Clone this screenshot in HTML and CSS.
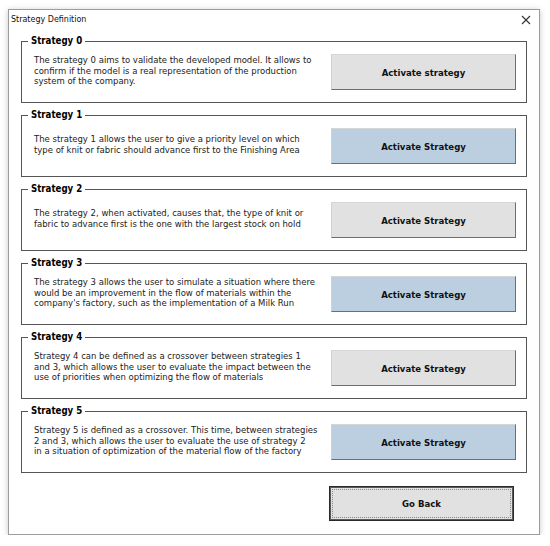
FILE: index.html
```html
<!DOCTYPE html>
<html>
<head>
<meta charset="utf-8">
<link rel="stylesheet" href="styles.css">
</head>
<body>
<div class="window">
  <div class="titlebar">
    <span class="title">Strategy Definition</span>
    <svg class="close" width="10" height="10" viewBox="0 0 10 10"><path d="M1 1L9 9M9 1L1 9" stroke="#333" stroke-width="1.1" fill="none"/></svg>
  </div>
  <div class="content">
    <div class="frame">
      <span class="legend">Strategy 0</span>
      <p class="desc">The strategy 0 aims to validate the developed model. It allows to<br>confirm if the model is a real representation of the production<br>system of the company.</p>
      <div class="btn gray">Activate strategy</div>
    </div>
    <div class="frame">
      <span class="legend">Strategy 1</span>
      <p class="desc">The strategy 1 allows the user to give a priority level on which<br>type of knit or fabric should advance first to the Finishing Area</p>
      <div class="btn blue">Activate Strategy</div>
    </div>
    <div class="frame">
      <span class="legend">Strategy 2</span>
      <p class="desc">The strategy 2, when activated, causes that, the type of knit or<br>fabric to advance first is the one with the largest stock on hold</p>
      <div class="btn gray">Activate Strategy</div>
    </div>
    <div class="frame">
      <span class="legend">Strategy 3</span>
      <p class="desc">The strategy 3 allows the user to simulate a situation where there<br>would be an improvement in the flow of materials within the<br>company's factory, such as the implementation of a Milk Run</p>
      <div class="btn blue">Activate Strategy</div>
    </div>
    <div class="frame">
      <span class="legend">Strategy 4</span>
      <p class="desc">Strategy 4 can be defined as a crossover between strategies 1<br>and 3, which allows the user to evaluate the impact between the<br>use of priorities when optimizing the flow of materials</p>
      <div class="btn gray">Activate Strategy</div>
    </div>
    <div class="frame">
      <span class="legend">Strategy 5</span>
      <p class="desc">Strategy 5 is defined as a crossover. This time, between strategies<br>2 and 3, which allows the user to evaluate the use of strategy 2<br>in a situation of optimization of the material flow of the factory</p>
      <div class="btn blue">Activate Strategy</div>
    </div>
    <div class="goback"><span class="goback-inner">Go Back</span></div>
  </div>
</div>
</body>
</html>
```
FILE: styles.css
```css
html, body {
  margin: 0;
  padding: 0;
  background: #ffffff;
}
body {
  font-family: "DejaVu Sans Condensed", "DejaVu Sans", sans-serif;
  color: #1e1e1e;
}
.window {
  margin: 9px 0 0 8px;
  width: 532px;
  height: 526px;
  box-sizing: border-box;
  border: 1px solid #9c9c9c;
  background: #ffffff;
  box-shadow: 0 1px 6px rgba(0, 0, 0, 0.22);
  display: flex;
  flex-direction: column;
}
.titlebar {
  height: 17px;
  display: flex;
  align-items: center;
  justify-content: space-between;
  padding: 0 8px 0 2px;
}
.title {
  font-size: 8.9px;
  color: #111;
}
.close {
  margin-top: 2px;
}
.content {
  padding: 14px 12px 0 12px;
  display: flex;
  flex-direction: column;
  gap: 12px;
}
.frame {
  position: relative;
  height: 62px;
  box-sizing: border-box;
  border: 1px solid #555555;
  display: flex;
  align-items: center;
  justify-content: space-between;
  padding: 0 10px 0 12px;
}
.legend {
  position: absolute;
  top: -7px;
  left: 6px;
  padding: 0 3px;
  background: #ffffff;
  font-size: 9.6px;
  line-height: 12px;
  font-weight: bold;
  color: #000;
}
.desc {
  margin: 0 0 2px 0;
  font-size: 9.45px;
  line-height: 10.7px;
  white-space: nowrap;
  color: #222;
}
.btn {
  width: 185px;
  height: 36px;
  box-sizing: border-box;
  display: flex;
  align-items: center;
  justify-content: center;
  font-size: 9.5px;
  font-weight: bold;
  color: #111;
  border-top: 1px solid #d6d6d6;
  border-left: 1px solid #d0d0d0;
  border-right: 1px solid #6e6e6e;
  border-bottom: 1px solid #6e6e6e;
}
.gray {
  background: #e1e1e1;
}
.blue {
  background: #bccfe0;
}
.goback {
  align-self: flex-end;
  margin: 1px 13px 0 0;
  width: 185px;
  height: 35px;
  box-sizing: border-box;
  border: 1px solid #2a2a2a;
  box-shadow: inset 0 0 0 1px #5a5a5a;
  background: #e1e1e1;
  padding: 2px;
  display: flex;
}
.goback-inner {
  flex: 1;
  border: 1px dotted #8a8a8a;
  display: flex;
  align-items: center;
  justify-content: center;
  font-size: 9.5px;
  font-weight: bold;
  color: #111;
}
```
